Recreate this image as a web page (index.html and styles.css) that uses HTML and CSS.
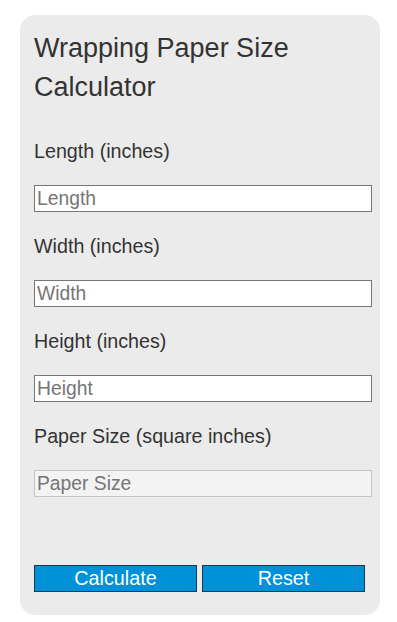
FILE: index.html
```html
<!DOCTYPE html>
<html>

<head>
    <link rel="stylesheet" href="styles.css">
</head>

<body>
    <div class="calc">
        <h1 class="calc-title">Wrapping Paper Size Calculator</h1>

        <label class="calc-label" for="length">Length (inches)</label>
        <input class="calc-input" id="length" type="text" placeholder="Length">

        <label class="calc-label" for="width">Width (inches)</label>
        <input class="calc-input" id="width" type="text" placeholder="Width">

        <label class="calc-label" for="height">Height (inches)</label>
        <input class="calc-input" id="height" type="text" placeholder="Height">

        <label class="calc-label" for="paper">Paper Size (square inches)</label>
        <input class="calc-input calc-result" id="paper" type="text" placeholder="Paper Size" readonly>

        <div class="calc-buttons">
            <button class="calc-btn" type="button">Calculate</button>
            <button class="calc-btn" type="reset">Reset</button>
        </div>
    </div>
</body>

</html>
```

FILE: styles.css
```css
body {
    margin: 0;
    padding: 15px 17px 7px 20px;
    background: #fff;
    font-family: "Liberation Sans", Arial, sans-serif;
    color: #333;
}

.calc {
    display: flex;
    flex-direction: column;
    width: 332px;
    padding: 14px 14px 23px 14px;
    background: #ebebeb;
    border-radius: 15px;
}

.calc-title {
    margin: 0 0 30px 0;
    font-size: 27px;
    font-weight: normal;
    line-height: 39px;
}

.calc-label {
    font-size: 19.7px;
    line-height: 28px;
    margin-bottom: 20px;
}

.calc-input {
    box-sizing: border-box;
    width: 338px;
    height: 27px;
    margin: 0 0 20px 0;
    padding: 2px;
    border: 1px solid #767676;
    background: #fff;
    font-family: "Liberation Sans", Arial, sans-serif;
    font-size: 19.3px;
    color: #333;
}

.calc-input::placeholder {
    color: #757575;
}

.calc-result {
    background: #f3f3f3;
    border-color: #c4c4c4;
}

.calc-buttons {
    display: flex;
    gap: 5px;
    margin-top: 48px;
}

.calc-btn {
    width: 163px;
    height: 27px;
    padding: 0;
    border: 1px solid #1c3a4c;
    background: #0091d9;
    color: #fff;
    font-family: "Liberation Sans", Arial, sans-serif;
    font-size: 19.8px;
}
```
